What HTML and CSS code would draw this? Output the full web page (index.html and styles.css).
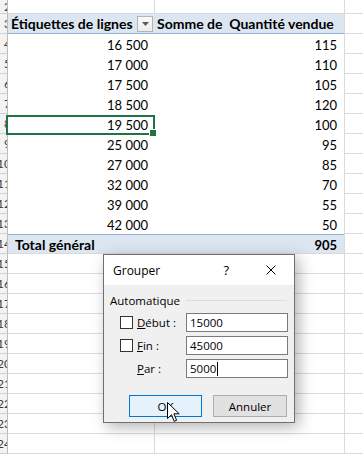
FILE: index.html
```html
<!DOCTYPE html>
<html lang="fr">
<head>
<meta charset="utf-8">
<title>Grouper</title>
<link rel="stylesheet" href="styles.css">
</head>
<body>
<div class="sheet">
  <div class="row top grid"><div class="rh"><span>2</span></div><div class="ca"></div><div class="cb"></div><div class="cc"></div></div>
  <div class="row hdr"><div class="rh"><span>3</span></div><div class="ca"><span class="lbl">Étiquettes de lignes</span><span class="filter"><svg width="7" height="4" viewBox="0 0 7 4"><path d="M0 0H7L3.5 4Z" fill="#5a5a5a"/></svg></span></div><div class="cb"><span class="lbl">Somme de&nbsp; Quantité vendue</span></div><div class="cc"></div></div>
  <div class="row data"><div class="rh"><span>4</span></div><div class="ca num">16 500</div><div class="cb num">115</div><div class="cc"></div></div>
  <div class="row data"><div class="rh"><span>5</span></div><div class="ca num">17 000</div><div class="cb num">110</div><div class="cc"></div></div>
  <div class="row data"><div class="rh"><span>6</span></div><div class="ca num">17 500</div><div class="cb num">105</div><div class="cc"></div></div>
  <div class="row data"><div class="rh"><span>7</span></div><div class="ca num">18 500</div><div class="cb num">120</div><div class="cc"></div></div>
  <div class="row data"><div class="rh"><span>8</span></div><div class="ca num sel">19 500</div><div class="cb num">100</div><div class="cc"></div></div>
  <div class="row data"><div class="rh"><span>9</span></div><div class="ca num">25 000</div><div class="cb num">95</div><div class="cc"></div></div>
  <div class="row data"><div class="rh"><span>10</span></div><div class="ca num">27 000</div><div class="cb num">85</div><div class="cc"></div></div>
  <div class="row data"><div class="rh"><span>11</span></div><div class="ca num">32 000</div><div class="cb num">70</div><div class="cc"></div></div>
  <div class="row data"><div class="rh"><span>12</span></div><div class="ca num">39 000</div><div class="cb num">55</div><div class="cc"></div></div>
  <div class="row data"><div class="rh"><span>13</span></div><div class="ca num">42 000</div><div class="cb num">50</div><div class="cc"></div></div>
  <div class="row total"><div class="rh"><span>14</span></div><div class="ca"><span class="lbl">Total général</span></div><div class="cb num">905</div><div class="cc"></div></div>
  <div class="row grid"><div class="rh"><span>15</span></div><div class="ca"></div><div class="cb"></div><div class="cc"></div></div>
  <div class="row grid"><div class="rh"><span>16</span></div><div class="ca"></div><div class="cb"></div><div class="cc"></div></div>
  <div class="row grid"><div class="rh"><span>17</span></div><div class="ca"></div><div class="cb"></div><div class="cc"></div></div>
  <div class="row grid"><div class="rh"><span>18</span></div><div class="ca"></div><div class="cb"></div><div class="cc"></div></div>
  <div class="row grid"><div class="rh"><span>19</span></div><div class="ca"></div><div class="cb"></div><div class="cc"></div></div>
  <div class="row grid"><div class="rh"><span>20</span></div><div class="ca"></div><div class="cb"></div><div class="cc"></div></div>
  <div class="row grid"><div class="rh"><span>21</span></div><div class="ca"></div><div class="cb"></div><div class="cc"></div></div>
  <div class="row grid"><div class="rh"><span>22</span></div><div class="ca"></div><div class="cb"></div><div class="cc"></div></div>
  <div class="row grid"><div class="rh"><span>23</span></div><div class="ca"></div><div class="cb"></div><div class="cc"></div></div>
  <div class="row grid"><div class="rh"><span>24</span></div><div class="ca"></div><div class="cb"></div><div class="cc"></div></div>
</div>

<div class="dialog">
  <div class="titlebar">
    <span class="title">Grouper</span>
    <span class="help">?</span>
    <svg class="close" width="10" height="10" viewBox="0 0 10 10"><path d="M0.5 0.5L9.5 9.5M9.5 0.5L0.5 9.5" stroke="#000" stroke-width="1"/></svg>
  </div>
  <div class="body">
    <div class="legend"><span>Automatique</span><span class="rule"></span></div>
    <div class="fields">
      <span class="cb-box"></span><label><u>D</u>ébut :</label><div class="input">15000</div>
      <span class="cb-box"></span><label><u>F</u>in :</label><div class="input">45000</div>
      <span></span><label><u>P</u>ar :</label><div class="input">5000<span class="caret"></span></div>
    </div>
    <div class="buttons">
      <div class="btn ok">OK</div>
      <div class="btn">Annuler</div>
    </div>
  </div>
</div>

<svg class="cursor" width="13" height="21" viewBox="0 0 13 21"><path d="M0.5 0.5V16.5L4.5 12.7L7.2 19.3L9.6 18.3L6.9 11.8H12.2Z" fill="#fff" stroke="#000" stroke-width="1" stroke-linejoin="miter"/></svg>
</body>
</html>
```

FILE: styles.css
```css
* { box-sizing: border-box; }
html, body { margin: 0; padding: 0; background: #fff; }
body {
  width: 363px;
  height: 457px;
  overflow: hidden;
  position: relative;
  font-family: Lato, "Liberation Sans", sans-serif;
  color: #000;
}
.sheet { display: flex; flex-direction: column; }
.row { display: flex; height: 20px; flex: none; }
.row.top { height: 14px; }
.rh {
  width: 8px;
  flex: none;
  background: #f3f3f3;
  border-right: 1px solid #bcbcbc;
  border-bottom: 1px solid #d0d0d0;
  display: flex;
  justify-content: flex-end;
  align-items: center;
  overflow: hidden;
  font-size: 12px;
  color: #3c3c3c;
}
.rh span { margin-right: -4px; }
.ca { width: 147px; flex: none; position: relative; display: flex; align-items: center; }
.cb { width: 189px; flex: none; display: flex; align-items: center; }
.cc { flex: 1; border-left: 1px solid #dadada; border-bottom: 1px solid #dadada; }
.grid .ca { border-right: 1px solid #dadada; border-bottom: 1px solid #dadada; }
.grid .cb { border-bottom: 1px solid #dadada; }

.num { justify-content: flex-end; padding-right: 7px; font-size: 13px; padding-top: 1px; }

.hdr .ca, .hdr .cb { background: #dce6f1; border-bottom: 1px solid #95b3d7; font-weight: 700; font-size: 14px; }
.hdr .ca { padding-left: 3px; }
.hdr .cb { padding-left: 2px; }
.lbl { white-space: nowrap; }
.filter {
  position: absolute;
  left: 129px;
  top: 2px;
  width: 16px;
  height: 16px;
  border: 1px solid #b4b4b4;
  background: linear-gradient(#fbfbfb, #ececec);
  display: flex;
  align-items: center;
  justify-content: center;
}

.total .ca, .total .cb { background: #dce6f1; border-top: 1px solid #95b3d7; border-bottom: 1px solid #dadada; font-weight: 700; }
.total .ca { padding-left: 7px; font-size: 14px; }
.total .cb { font-size: 13px; }

.sel::after {
  content: "";
  position: absolute;
  left: -2px;
  top: 1px;
  right: 0;
  bottom: -1px;
  border: 2px solid #217346;
}
.sel::before {
  content: "";
  position: absolute;
  right: -2px;
  bottom: -3px;
  width: 6px;
  height: 6px;
  background: #217346;
  border: 1px solid #fff;
  z-index: 2;
}

.dialog {
  position: absolute;
  left: 103px;
  top: 254px;
  width: 192px;
  height: 169px;
  border: 1px solid #6f6f6f;
  background: #f0f0f0;
  box-shadow: 4px 4px 14px rgba(0, 0, 0, 0.3);
  font-family: "Open Sans", "Noto Sans", sans-serif;
  font-size: 11px;
  display: flex;
  flex-direction: column;
}
.titlebar {
  height: 30px;
  background: #fff;
  display: flex;
  align-items: center;
  padding-left: 9px;
  flex: none;
}
.title { font-size: 12px; flex: 1; }
.help { font-size: 13px; margin-right: 37px; }
.close { margin-right: 18px; }
.body { padding: 7px 6px 0 6px; display: flex; flex-direction: column; }
.legend { height: 16px; display: flex; align-items: center; gap: 6px; font-size: 11.5px; }
.rule { flex: 1; height: 1px; background: #dcdcdc; margin-right: 1px; }
.fields {
  margin-top: 5px;
  display: grid;
  grid-template-columns: 13px 45px 102px;
  grid-auto-rows: 19px;
  column-gap: 4px;
  row-gap: 4px;
  padding-left: 10px;
  align-items: center;
}
.cb-box { width: 13px; height: 13px; border: 1px solid #333; background: #fff; margin-top: -1px; }
label { white-space: nowrap; font-size: 11.5px; }
.input {
  height: 19px;
  border: 1px solid #7a7a7a;
  background: #fff;
  padding-left: 3px;
  display: flex;
  align-items: center;
  font-size: 11.5px;
}
.caret { width: 1px; height: 14px; background: #000; margin-left: 1px; }
.buttons { margin-top: 17px; display: flex; gap: 11px; padding-left: 19px; }
.btn {
  width: 74px;
  height: 22px;
  background: #e1e1e1;
  border: 1px solid #adadad;
  display: flex;
  align-items: center;
  justify-content: center;
  font-size: 11.5px;
}
.btn.ok { width: 73px; background: #e5f1fb; border-color: #0078d7; }
.cursor { position: absolute; left: 167px; top: 402px; }
```
